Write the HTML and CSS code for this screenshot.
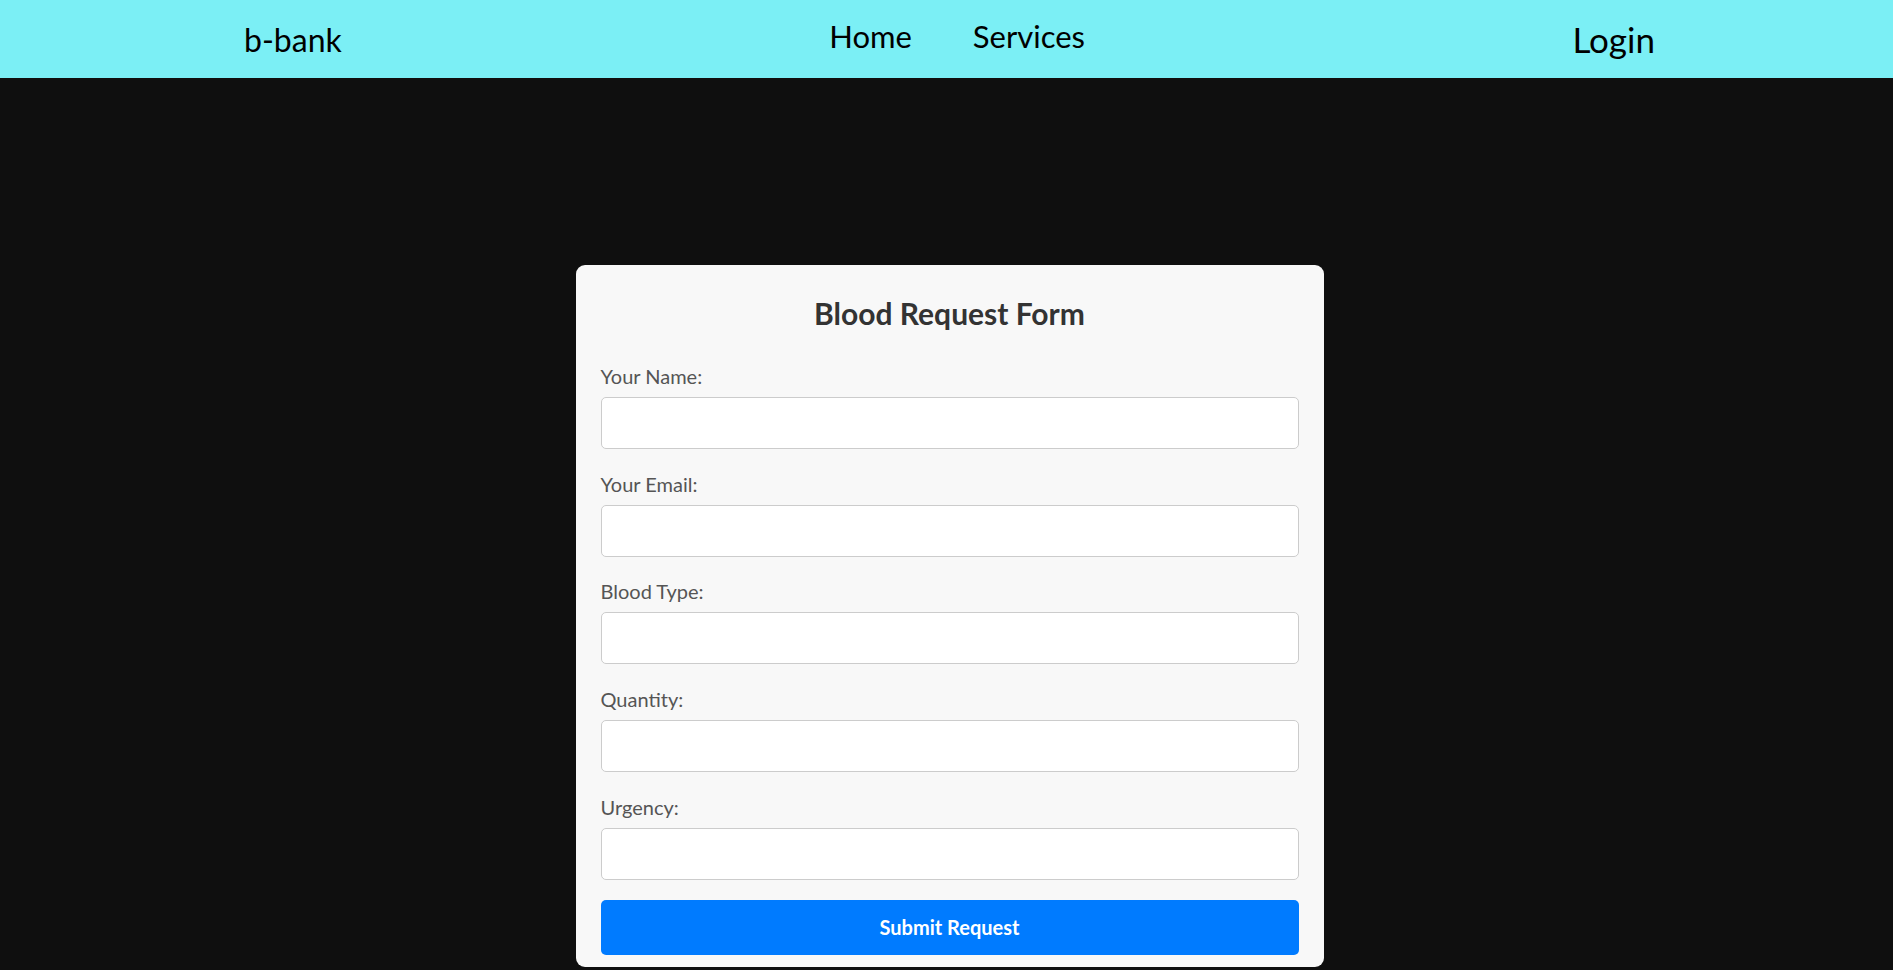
FILE: index.html
```html
<!DOCTYPE html>
<html lang="en">
<head>
  <meta charset="UTF-8">
  <meta name="viewport" content="width=device-width, initial-scale=1.0">
  <title>b-bank | Blood Request</title>
  <link rel="stylesheet" href="styles.css">
</head>
<body>
  <nav class="navbar">
    <a href="#" class="logo">b-bank</a>
    <ul class="nav-links">
      <li><a href="#">Home</a></li>
      <li><a href="#">Services</a></li>
    </ul>
    <a href="#" class="login">Login</a>
  </nav>

  <main class="page">
    <div class="form-card">
      <h2>Blood Request Form</h2>
      <form>
        <div class="field">
          <label for="name">Your Name:</label>
          <input type="text" id="name">
        </div>
        <div class="field">
          <label for="email">Your Email:</label>
          <input type="email" id="email">
        </div>
        <div class="field">
          <label for="bloodType">Blood Type:</label>
          <input type="text" id="bloodType">
        </div>
        <div class="field">
          <label for="quantity">Quantity:</label>
          <input type="text" id="quantity">
        </div>
        <div class="field">
          <label for="urgency">Urgency:</label>
          <input type="text" id="urgency">
        </div>
        <button type="submit">Submit Request</button>
      </form>
    </div>
  </main>
</body>
</html>
```

FILE: styles.css
```css
/* General styles */
* {
  margin: 0;
  padding: 0;
  box-sizing: border-box;
  font-family: Lato, "Open Sans", sans-serif;
}

body {
  background-color: #0f0f0f;
  height: 100vh;
  overflow: hidden;
}

a {
  color: #000;
  text-decoration: none;
}

/* Navbar */
.navbar {
  height: 78px;
  background-color: #7beff5;
  display: flex;
  justify-content: space-between;
  align-items: center;
  padding: 0 238px 0 244px;
}

.logo {
  font-size: 32px;
}

.nav-links {
  display: flex;
  gap: 61px;
  list-style: none;
  margin-bottom: 7px;
}

.nav-links a {
  font-size: 31px;
}

.login {
  font-size: 35px;
}

/* Form */
.page {
  padding-top: 187px;
  display: flex;
  justify-content: center;
}

.form-card {
  width: 748px;
  background-color: #f8f8f8;
  border-radius: 9px;
  padding: 25px 25px 12px;
  margin-left: 6px;
}

.form-card h2 {
  font-size: 30px;
  line-height: 34px;
  font-weight: 700;
  color: #333;
  text-align: center;
  margin: 6px 0 33px;
}

.field {
  margin-bottom: 21.7px;
}

.field:last-of-type {
  margin-bottom: 20px;
}

.field label {
  display: block;
  font-size: 20px;
  line-height: 26px;
  color: #555;
  margin-bottom: 8px;
}

.field input {
  display: block;
  width: 100%;
  height: 52px;
  background-color: #fff;
  border: 1px solid #ccc;
  border-radius: 5px;
  padding: 0 12px;
  font-size: 16px;
}

button {
  display: block;
  width: 100%;
  height: 55px;
  background-color: #007bff;
  color: #fff;
  border: none;
  border-radius: 5px;
  font-size: 20px;
  font-weight: 700;
  cursor: pointer;
}
```
